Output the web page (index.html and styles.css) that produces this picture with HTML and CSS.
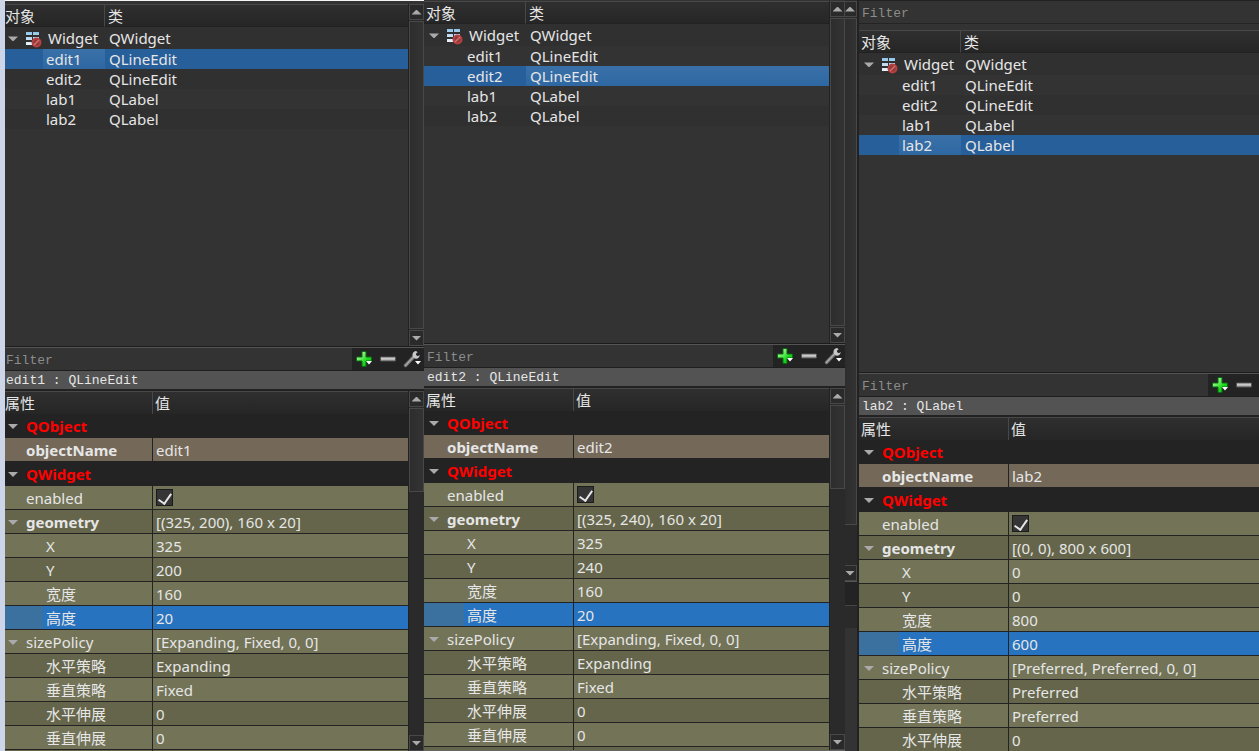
FILE: index.html
```html
<!DOCTYPE html>
<html lang="zh-CN">
<head>
    <meta charset="UTF-8">
    <meta name="viewport" content="width=device-width, initial-scale=1.0">
    <title>Qt Designer - 属性</title>
    <link rel="stylesheet" href="styles.css">
</head>
<body>

    <svg class="defs" width="0" height="0" aria-hidden="true">
        <defs>
            <linearGradient id="bar" x1="0" y1="0" x2="0" y2="1">
                <stop offset="0" stop-color="#8fc4ea"/>
                <stop offset="1" stop-color="#eef6fb"/>
            </linearGradient>
            <linearGradient id="green" x1="0" y1="0" x2="1" y2="1">
                <stop offset="0.2" stop-color="#a5f794"/>
                <stop offset="0.6" stop-color="#1fdc1f"/>
                <stop offset="1" stop-color="#05a805"/>
            </linearGradient>
            <linearGradient id="steel" x1="0" y1="0" x2="0" y2="1">
                <stop offset="0" stop-color="#e2e2e2"/>
                <stop offset="1" stop-color="#a0a0a0"/>
            </linearGradient>
        </defs>
        <symbol id="layout" viewBox="0 0 16 16">
            <path fill="url(#bar)" d="M0 0h6v3H0zM7 0h6v3H7zM0 5h6v3H0zM7 5h6v3H7zM0 10h6v3H0z"/>
            <circle cx="10.5" cy="10.5" r="4" fill="#8b3a3e" stroke="#b9403f" stroke-width="2"/>
            <path d="M8 13l5-5" stroke="#d9706c" stroke-width="1.5"/>
        </symbol>
        <symbol id="plus" viewBox="0 0 18 18">
            <path d="M7 1.5h4V7h5.5v4H11v5.5H7V11H1.5V7H7z" fill="url(#green)" stroke="#0a6b12" stroke-width="1"/>
            <path d="M11 11h6l-3 3.5z" fill="#fff"/>
        </symbol>
        <symbol id="minus" viewBox="0 0 18 18">
            <rect x="1.5" y="7" width="15" height="4" rx="0.5" fill="url(#steel)" stroke="#555"/>
        </symbol>
        <symbol id="wrench" viewBox="0 0 18 18">
            <path d="M2.5 15.5L11 6.5" stroke="#707070" stroke-width="3.5" stroke-linecap="round"/>
            <path d="M2.5 15.5L12 5.5" stroke="#a8a8a8" stroke-width="1.5" stroke-linecap="round"/>
            <path d="M13 1c-3 .5-4 3-3.2 5.5l2 2c2.5.6 4.700-.7 5-3.500l-2 1.200-1.800-1.200.2-1.800 1.500-1z" fill="#c8c8c8"/>
            <path d="M12 11h6l-3 3.5z" fill="#fff"/>
        </symbol>
    </svg>

    <main class="panels" id="panels"></main>

    <script>
        const objects = [["edit1", "QLineEdit"], ["edit2", "QLineEdit"], ["lab1", "QLabel"], ["lab2", "QLabel"]];

        const panels = [
            { id: "first", name: "edit1", cls: "QLineEdit", focus: "name", geometry: ["325", "200", "160", "20"], policy: ["Expanding", "Fixed"], scroll: true },
            { id: "second", name: "edit2", cls: "QLineEdit", focus: "class", geometry: ["325", "240", "160", "20"], policy: ["Expanding", "Fixed"], scroll: true },
            { id: "third", name: "lab2", cls: "QLabel", focus: "name", geometry: ["0", "0", "800", "600"], policy: ["Preferred", "Preferred"], scroll: false }
        ];

        const icon = (name) => `<svg class="icon-${name}" aria-hidden="true"><use href="#${name}"/></svg>`;

        const scrollbar = (kind) => `<div class="scrollbar ${kind}">
            <button class="arrow up" aria-label="up"></button>
            <div class="track"><div class="thumb"></div></div>
            <button class="arrow down" aria-label="down"></button>
        </div>`;

        function treeTable(panel) {
            const rows = objects.map(([name, cls]) => {
                const state = name === panel.name ? `selected focus-${panel.focus}` : "";
                return `<tr class="${state}"><td class="child"><span>${name}</span></td><td>${cls}</td></tr>`;
            }).join("");
            return `<table class="tree">
                <thead><tr><th>对象</th><th>类</th></tr></thead>
                <tbody>
                    <tr class="root"><td><i class="toggle"></i>${icon("layout")}Widget</td><td>QWidget</td></tr>
                    ${rows}
                </tbody>
            </table>`;
        }

        function propertyTable(panel) {
            const [x, y, w, h] = panel.geometry;
            const [hor, ver] = panel.policy;
            const check = `<input type="checkbox" id="enabled-${panel.id}" checked>`;
            const rows = [
                ["group", "QObject", ""],
                ["object bold", "objectName", panel.name],
                ["group", "QWidget", ""],
                ["light", `<label for="enabled-${panel.id}">enabled</label>`, check],
                ["dark bold open", "geometry", `[(${x}, ${y}), ${w} x ${h}]`],
                ["light sub", "X", x],
                ["dark sub", "Y", y],
                ["light sub", "宽度", w],
                ["current sub", "高度", h],
                ["light open", "sizePolicy", `[${hor}, ${ver}, 0, 0]`],
                ["dark sub", "水平策略", hor],
                ["light sub", "垂直策略", ver],
                ["dark sub", "水平伸展", "0"]
            ];
            // the last panel's list ends one row earlier
            if (panel.scroll) {
                rows.push(["light sub", "垂直伸展", "0"], ["dark", "", ""]);
            }
            return `<table class="props">
                <thead><tr><th>属性</th><th>值</th></tr></thead>
                <tbody>${rows.map(([state, key, value]) => {
                    const toggle = /group|open/.test(state) ? `<i class="toggle"></i>` : "";
                    return `<tr class="${state}"><td>${toggle}${key}</td><td>${value}</td></tr>`;
                }).join("")}</tbody>
            </table>`;
        }

        document.getElementById("panels").innerHTML = panels.map(panel => `
            ${panel.scroll ? "" : `<div class="sliver">${scrollbar("cut")}<div class="sliver-bar"></div><div class="sliver-rest"></div></div>`}
            <section class="panel ${panel.id}">
                <div class="objects">
                    <div class="objects-main">
                        ${panel.scroll ? "" : `<input class="filter top-filter" type="text" placeholder="Filter" aria-label="Filter objects">`}
                        ${treeTable(panel)}
                    </div>
                    ${panel.scroll ? scrollbar("tall") : ""}
                </div>
                <div class="toolbar">
                    <input class="filter" type="text" placeholder="Filter" aria-label="Filter properties">
                    <div class="tools">
                        <button aria-label="Add">${icon("plus")}</button>
                        <button aria-label="Remove">${icon("minus")}</button>
                        ${panel.scroll ? `<button aria-label="Configure">${icon("wrench")}</button>` : ""}
                    </div>
                </div>
                <div class="caption">${panel.name} : ${panel.cls}</div>
                <div class="properties">
                    <div class="properties-main">${propertyTable(panel)}</div>
                    ${panel.scroll ? scrollbar("short") : ""}
                </div>
            </section>`).join("");
    </script>

</body>
</html>
```
FILE: styles.css
```css
* { box-sizing: border-box; }
body { margin: 0; background: #333; color: #e6e6e6; font-family: "Noto Sans", "Noto Sans CJK SC", sans-serif; font-size: 15px; line-height: 20px; }
button { margin: 0; padding: 0; border: 0; background: none; }
.defs { position: absolute; }

.panels { display: grid; grid-template-columns: 419fr 421fr 14px 400fr; height: 100vh; border-left: 5px solid #cdd6e8; overflow: hidden; }
.panel { --inset: 2px; display: flex; flex-direction: column; min-width: 0; min-height: 0; }
.first { --inset: 0px; --objects: 347px; --top: 4px; }
.second { --objects: 344px; --top: 1px; border-bottom: 1px solid #666; }
.third { --objects: 373px; --top: 0px; }

.objects { display: flex; flex: 0 0 var(--objects); padding-top: var(--top); border-bottom: 1px solid #1c1c1c; }
.first .objects { border-top: 1px solid #f4f6f8; padding-top: 3px; }
.objects-main, .properties-main { flex: 1; min-width: 0; overflow: hidden; }

table { width: 100%; border-collapse: separate; border-spacing: 0; table-layout: fixed; }
th, td { padding: 0; text-align: left; white-space: nowrap; }
th { height: 23px; border-top: 1px solid #484848; background: linear-gradient(#2f2f2f, #262626); font-weight: normal; }
th:first-child { padding-left: var(--inset); border-right: 1px solid #484848; }
th:last-child { padding-left: 3px; }

.tree th { border-bottom: 1px solid #222; }
.tree th:first-child { width: calc(100px + var(--inset)); }
.tree td { height: 20px; }
.tree td:first-child { padding-left: var(--inset); }
.tree td:last-child { padding-left: 4px; }
.tree .root td { height: 22px; }
.tree tr:nth-child(odd) { background: #303030; }
.tree .root .toggle { margin: 0 8px 2px 3px; }
.tree .child span { display: block; margin-left: 38px; padding-left: 3px; }
.tree .selected td { background: #275f9b; }
.tree .focus-name .child span, .tree .focus-class td:last-child { background: linear-gradient(#3a70a8, #2e68a2); }

.toggle { display: inline-block; width: 10px; height: 5px; margin-bottom: 2px; background: #aaa; clip-path: polygon(0 0, 100% 0, 50% 100%); vertical-align: middle; }
.icon-layout { width: 16px; height: 16px; margin: 0 6px 0 0; vertical-align: middle; }
.icon-plus, .icon-minus, .icon-wrench { display: block; width: 18px; height: 18px; margin: auto; }

.filter { min-width: 0; height: 22px; padding: 3px 0 0 3px; border: 0; outline: 0; background: #333; color: #e6e6e6; font: 13px/19px "Liberation Mono", monospace; }
.first .filter { padding-left: 1px; }
.filter::placeholder { color: #8c8c8c; opacity: 1; }
.top-filter { display: block; width: 100%; height: 24px; margin-bottom: 6px; border-top: 1px solid #222; border-bottom: 1px solid #242424; }

.toolbar { display: flex; flex: 0 0 24px; border-top: 1px solid #555; border-bottom: 1px solid #1e1e1e; }
.toolbar .filter { flex: 1; }
.tools { display: flex; background: #232323; }
.third .tools { padding-right: 3px; }
.tools button { width: 24px; }

.caption { flex: 0 0 20px; padding: 2px 0 0 3px; border-bottom: 2px solid #222; background: #535353; font: 13px/16px "Liberation Mono", monospace; }
.first .caption { padding-left: 1px; }
.properties { display: flex; flex: 1; min-height: 0; }

.props th:first-child { width: calc(148px + var(--inset)); }
.props th:last-child { padding-left: 2px; }
.props td { height: 24px; border-bottom: 1px solid #232323; }
.props td:first-child { padding-left: calc(21px + var(--inset)); border-right: 1px solid #232323; }
.props td:last-child { padding-left: 3px; }
.props .sub td:first-child { padding-left: calc(41px + var(--inset)); }
.props .group td { background: #232323; color: #f00; font-weight: bold; }
.props .group td:first-child, .props .open td:first-child { padding-left: calc(3px + var(--inset)); }
.props .toggle { margin-right: 8px; }
.bold td:first-child { font-weight: bold; }
.object { background: #746858; }
.light { background: #727357; }
.dark { background: #64654a; }
.current { background: #2773bf; }
.current td:first-child { background: linear-gradient(#3b719f, #3b719f) no-repeat 0 0 / calc(38px + var(--inset)) 100%; }

input[type="checkbox"] { display: block; width: 17px; height: 17px; margin: 0; appearance: none; border: 1px solid #1c1c1c; background: #353535; }
input[type="checkbox"]:checked::before { content: ""; display: block; width: 6px; height: 11px; margin: 1px 0 0 4px; border: solid #e6e6e6; border-width: 0 2px 2px 0; transform: rotate(35deg); }

.scrollbar { display: flex; flex: 0 0 16px; flex-direction: column; border-left: 1px solid #222; background: #2a2a2a; }
.arrow { flex: 0 0 16px; border: 1px solid #484848; }
.arrow::before { content: ""; display: block; width: 10px; height: 5px; margin: auto; background: #aaa; clip-path: polygon(50% 0, 100% 100%, 0 100%); }
.arrow.down::before { clip-path: polygon(0 0, 100% 0, 50% 100%); }
.track { flex: 1; min-height: 0; padding: 1px 0; }
.thumb { height: 100%; border: 1px solid #484848; background: linear-gradient(90deg, #2d2d2d, #333); }
.short .thumb { height: 84px; }

.sliver { display: flex; flex-direction: column; overflow: hidden; border-right: 2px solid #222; }
.sliver .scrollbar { flex: 0 0 581px; padding-top: 1px; border-left: 0; }
.sliver .arrow, .sliver .thumb { border-left: 0; }
.sliver .arrow::before { margin-left: 0; }
.cut .thumb { height: 507px; }
.sliver-bar { flex: 0 0 25px; border-top: 1px solid #555; border-bottom: 1px solid #444; background: #232323; }
.sliver-rest { flex: 1; border-top: 22px solid #2a2a2a; background: #333; }
```
